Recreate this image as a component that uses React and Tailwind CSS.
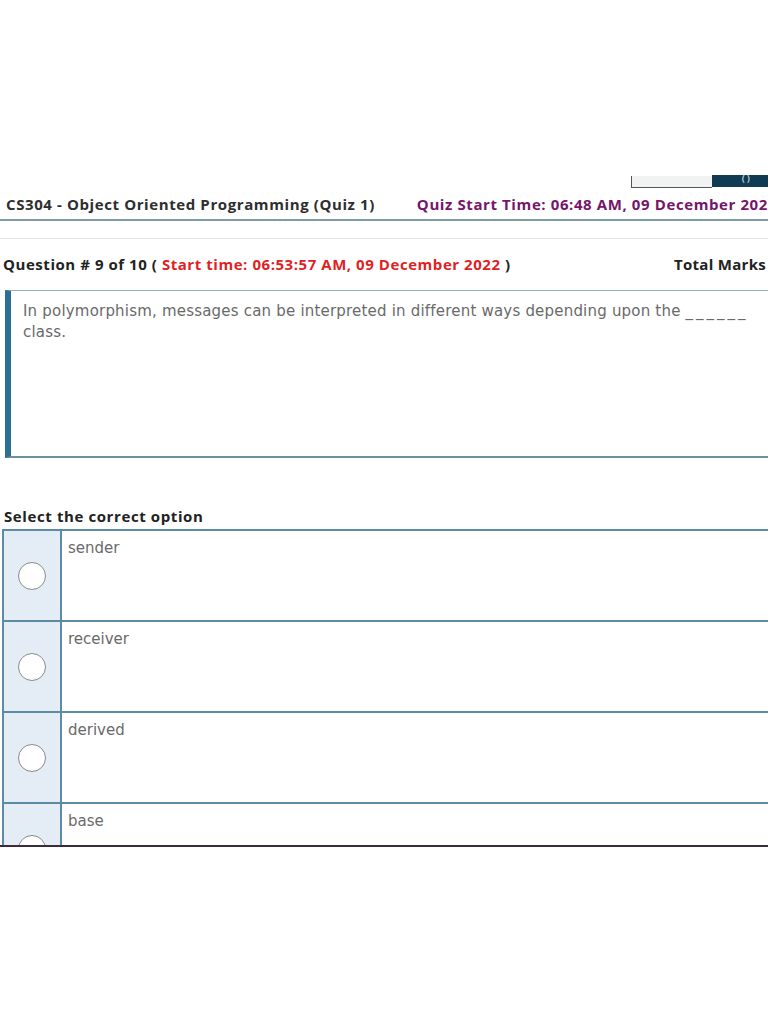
import React from "react";

const options = ["sender", "receiver", "derived", "base"];

const App = () => {
  return (
    <div
      className="w-[768px] h-[1024px] bg-white overflow-hidden"
      style={{ fontFamily: "'Open Sans', 'Noto Sans', sans-serif" }}
    >
      <div className="h-[175px]" />

      <div className="h-[672px] overflow-hidden border-b-2 border-[#3b2b3b]">
        {/* top-right controls */}
        <div className="flex justify-end h-[12px]">
          <div className="w-[81px] h-[12px] mt-[1px] bg-[#f1f3f3] border-l border-b border-[#555]" />
          <div className="w-[56px] h-[12px] bg-[#0f3b55] text-white text-[9px] leading-[8px] pl-[30px]">
            ( )
          </div>
        </div>

        {/* course header */}
        <div className="flex items-end h-[34px] pb-[4px] pl-[6px] border-b-2 border-[#7d9ca6] whitespace-nowrap tracking-[0.6px]">
          <span className="text-[15px] font-bold text-[#2e2e2e]">
            CS304 - Object Oriented Programming (Quiz 1)
          </span>
          <span className="ml-[42px] text-[15px] font-bold text-[#76156b]">
            Quiz Start Time: 06:48 AM, 09 December 2022
          </span>
        </div>
        <div className="mt-[17px] border-t border-[#e4e4e4]" />

        {/* question header */}
        <div className="flex items-center justify-between h-[51px] pl-[3px] whitespace-nowrap tracking-[0.55px]">
          <div className="text-[15px] font-bold text-[#222]">
            Question # 9 of 10 ({" "}
            <span className="text-[#e01f26]">
              Start time: 06:53:57 AM, 09 December 2022
            </span>{" "}
            )
          </div>
          <div className="text-[15px] font-bold text-[#222] pr-[2px] tracking-[0.3px]">
            Total Marks
          </div>
        </div>

        {/* question text box */}
        <div className="ml-[5px] h-[168px] border-l-[6px] border-l-[#2b6f93] border-t border-t-[#8fb3c4] border-b-2 border-b-[#6e909e] pl-[12px] pt-[10px]">
          <p
            className="w-[740px] text-[15px] leading-[21px] text-[#6a6a6a] tracking-[0.2px]"
            style={{ fontFamily: "'DejaVu Sans', 'Noto Sans', sans-serif" }}
          >
            In polymorphism, messages can be interpreted in different ways
            depending upon the <span className="tracking-[3px]">______</span>{" "}
            class.
          </p>
        </div>

        <div className="mt-[48px] pl-[4px] text-[15px] font-bold text-[#222] leading-[20px] tracking-[0.6px]">
          Select the correct option
        </div>

        {/* options */}
        <div className="mt-[3px] ml-[2px] border-t-2 border-l-2 border-[#5d8ba4]">
          {options.map((opt) => (
            <div
              key={opt}
              className="flex h-[91px] border-b-2 border-[#5d8ba4]"
            >
              <div className="w-[58px] shrink-0 bg-[#e4ecf6] border-r-2 border-[#5d8ba4] flex items-center justify-center">
                <div className="w-[28px] h-[28px] rounded-full bg-white border-[1.5px] border-[#8a8a8a]" />
              </div>
              <div
                className="flex-1 bg-white pl-[6px] pt-[6px] text-[15px] text-[#6a6a6a]"
                style={{ fontFamily: "'DejaVu Sans', 'Noto Sans', sans-serif" }}
              >
                {opt}
              </div>
            </div>
          ))}
        </div>
      </div>
    </div>
  );
};

export default App;
